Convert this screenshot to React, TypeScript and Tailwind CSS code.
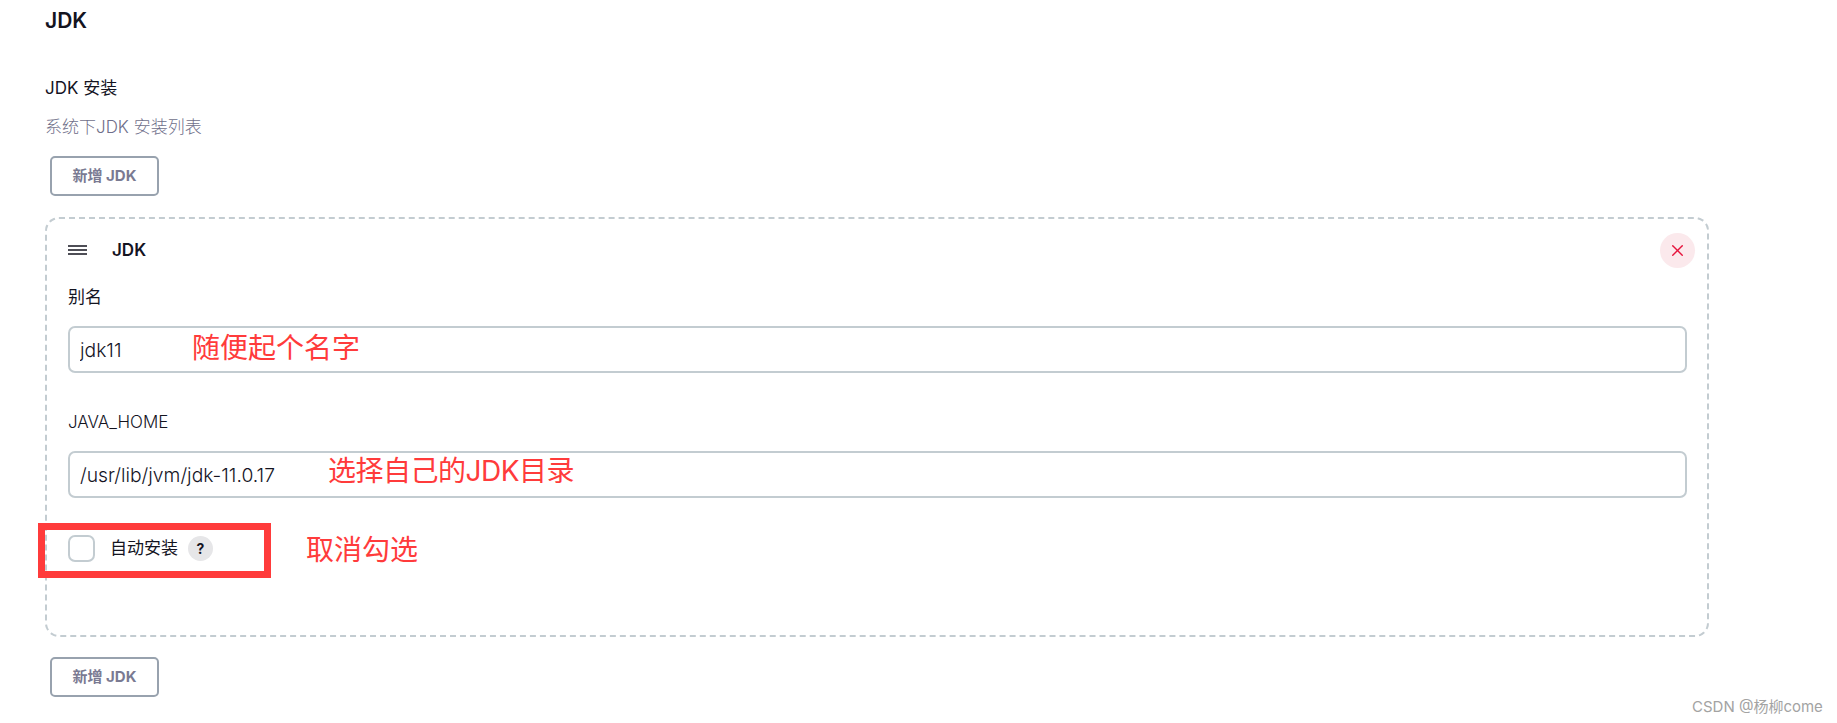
import { X } from "lucide-react";

const FONT = "font-['Inter','Noto_Sans_CJK_SC',sans-serif]";

function AddButton() {
  return (
    <button
      type="button"
      className="ml-[5px] flex h-10 w-[109px] items-center justify-center rounded-[5px] border-2 border-[#98a2ae] bg-white text-[15px] font-bold text-[#7a7a92]"
    >
      新增 JDK
    </button>
  );
}

function Note({ className, children }: { className: string; children: React.ReactNode }) {
  return (
    <span className={`absolute whitespace-nowrap text-[28px] leading-none text-[#ff3b3b] ${className}`}>
      {children}
    </span>
  );
}

function Field({ label, value, labelClass }: { label: string; value: string; labelClass: string }) {
  return (
    <div>
      <div className={`h-6 text-[17px] leading-6 text-[#14141f] ${labelClass}`}>{label}</div>
      <input
        readOnly
        value={value}
        className="mt-[17px] h-[47px] w-full rounded-[7px] border-2 border-[#c3ccd1] bg-white px-[10px] text-[19.3px] font-light text-[#14141f] outline-none"
      />
    </div>
  );
}

export default function App() {
  return (
    <div className={`relative h-[723px] w-[1837px] overflow-hidden bg-white pl-[45px] ${FONT}`}>
      <h2 className="pt-[7px] text-[21px] font-semibold leading-7 text-[#14141f]">JDK</h2>
      <div className="mt-[41px] text-[17px] leading-6 text-[#14141f]">JDK 安装</div>
      <div className="mt-[15px] text-[17px] font-light leading-6 text-[#6f6f8a]">系统下JDK 安装列表</div>
      <div className="mt-[17px]">
        <AddButton />
      </div>

      <div className="mt-[21px] h-[420px] w-[1664px] rounded-[14px] border-2 border-dashed border-[#c3ccd1] pl-[21px] pr-[20px]">
        <div className="flex h-[62px] items-center">
          <svg viewBox="0 0 19 10" className="h-[10px] w-[19px] text-[#14141f]" aria-hidden="true">
            <path d="M0 1h19M0 5h19M0 9h19" stroke="currentColor" strokeWidth="1.5" fill="none" />
          </svg>
          <span className="ml-[25px] pt-[2px] text-[17px] font-semibold text-[#14141f]">JDK</span>
          <span className="ml-auto mr-[-8px] flex size-[35px] items-center justify-center rounded-full bg-[#fbe9ec]">
            <X className="size-[19px] text-[#e6143c]" strokeWidth={1.75} aria-hidden="true" />
          </span>
        </div>
        <div className="mt-[4px] flex flex-col gap-[37px]">
          <Field label="别名" value="jdk11" labelClass="font-normal" />
          <Field label="JAVA_HOME" value="/usr/lib/jvm/jdk-11.0.17" labelClass="font-light" />
        </div>
        <div className="mt-[37px] flex items-center">
          <span className="size-[27px] rounded-[7px] border-2 border-[#c3ccd1] bg-white" />
          <span className="ml-[15px] text-[17px] text-[#14141f]">自动安装</span>
          <span className="ml-[10px] flex size-[25px] items-center justify-center rounded-full bg-[#e6e6e8] text-[14px] font-bold text-[#14141f]">
            ?
          </span>
        </div>
      </div>

      <div className="mt-[20px]">
        <AddButton />
      </div>

      {/* hand-drawn annotations lying over the screenshot */}
      <Note className="left-[192px] top-[334px]">随便起个名字</Note>
      <Note className="left-[328px] top-[457px] tracking-[-0.5px]">选择自己的JDK目录</Note>
      <Note className="left-[306px] top-[536px]">取消勾选</Note>
      <div className="absolute left-[38px] top-[523px] h-[55px] w-[233px] border-[7px] border-[#ff3b3b]" />
      <span className="absolute left-[1692px] top-[696px] text-[15px] text-[#a3a3a3]">CSDN @杨柳come</span>
    </div>
  );
}
